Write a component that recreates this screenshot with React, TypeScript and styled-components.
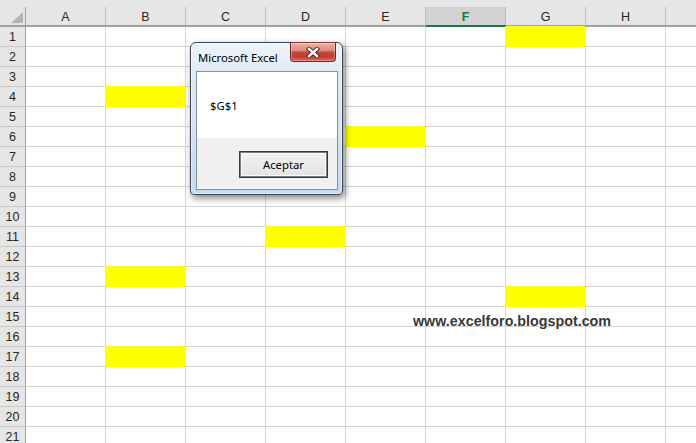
import React from "react";
import styled, { createGlobalStyle } from "styled-components";

const GlobalStyle = createGlobalStyle`
  html, body {
    margin: 0;
    padding: 0;
    background: #fff;
    overflow: hidden;
  }
  body {
    font-family: "Liberation Sans", Arial, sans-serif;
  }
`;

// Column I only peeks in at the right edge; its letter sits off-screen.
const COLUMNS = ["A", "B", "C", "D", "E", "F", "G", "H", "I"];
const VISIBLE_LABELS = new Set(["A", "B", "C", "D", "E", "F", "G", "H"]);
const ROW_COUNT = 21;
const SELECTED_COLUMN = "F";
const FILLED = new Set(["G1", "B4", "E6", "D11", "B13", "G14", "B17"]);

const Screen = styled.div`
  position: relative;
  width: 696px;
  height: 443px;
  overflow: hidden;
`;

const Sheet = styled.div`
  display: grid;
  grid-template-columns: 26px repeat(9, 80px);
  grid-template-rows: 27px;
  grid-auto-rows: 20px;
  width: max-content;
`;

const HeaderStrip = styled.div<{ $selected?: boolean }>`
  box-sizing: border-box;
  padding-top: 7px;
  background: #e6e6e6;
  border-bottom: 2px solid ${(p) => (p.$selected ? "#217346" : "#a2a2a2")};
  display: flex;
`;

const CornerBox = styled.div`
  flex: 1;
  box-sizing: border-box;
  border-right: 1px solid #a2a2a2;
  display: flex;
  align-items: flex-end;
  justify-content: flex-end;
  padding: 0 2px 2px 0;
`;

const ColumnLabel = styled.div<{ $selected?: boolean }>`
  flex: 1;
  box-sizing: border-box;
  border-right: 1px solid #bdbdbd;
  background: ${(p) => (p.$selected ? "#d2d2d2" : "transparent")};
  color: ${(p) => (p.$selected ? "#217346" : "#262626")};
  font-weight: ${(p) => (p.$selected ? 700 : 400)};
  font-size: 12.5px;
  display: flex;
  align-items: center;
  justify-content: center;
  padding-top: 1px;
`;

const RowHeader = styled.div`
  box-sizing: border-box;
  background: #e6e6e6;
  border-right: 1px solid #a2a2a2;
  border-bottom: 1px solid #c8c8c8;
  color: #262626;
  font-size: 12.5px;
  display: flex;
  align-items: center;
  justify-content: center;
`;

const Cell = styled.div<{ $filled?: boolean }>`
  box-sizing: border-box;
  border-right: 1px solid ${(p) => (p.$filled ? "#ffff00" : "#d4d4d4")};
  border-bottom: 1px solid ${(p) => (p.$filled ? "#ffff00" : "#d4d4d4")};
  background: ${(p) => (p.$filled ? "#ffff00" : "#fff")};
  box-shadow: ${(p) => (p.$filled ? "-1px -1px 0 0 #ffff00" : "none")};
`;

const Watermark = styled.div`
  position: absolute;
  left: 413px;
  top: 313px;
  font-family: "Liberation Sans", Arial, sans-serif;
  font-weight: 700;
  font-size: 14.3px;
  line-height: 16px;
  color: #383838;
  white-space: nowrap;
`;

const Window = styled.div`
  position: absolute;
  left: 190px;
  top: 42px;
  width: 153px;
  height: 153px;
  box-sizing: border-box;
  display: flex;
  flex-direction: column;
  padding: 0 4px 4px 5px;
  border: 1px solid #3b4655;
  border-radius: 6px 6px 4px 4px;
  background: linear-gradient(180deg, #edf3fa 0%, #dfe9f5 22%, #c6daf0 100%);
  box-shadow: inset 0 0 0 1px rgba(255, 255, 255, 0.55),
    2px 3px 7px rgba(0, 0, 0, 0.5);
  font-family: "Noto Sans", "Open Sans", sans-serif;
`;

const TitleBar = styled.div`
  height: 28px;
  display: flex;
  justify-content: space-between;
  align-items: flex-start;
`;

const Title = styled.span`
  align-self: center;
  padding-left: 2px;
  font-size: 11.3px;
  color: #000;
`;

const CloseButton = styled.div`
  width: 46px;
  height: 20px;
  margin: -1px 2px 0 0;
  box-sizing: border-box;
  border: 1px solid #6a2a22;
  border-top-color: #8a3a30;
  border-radius: 0 0 4px 4px;
  background: linear-gradient(
    180deg,
    #eab2a9 0%,
    #e0897e 42%,
    #c9483a 50%,
    #c23d2f 75%,
    #d56a5c 100%
  );
  box-shadow: inset 0 0 0 1px rgba(255, 255, 255, 0.3);
  display: flex;
  align-items: center;
  justify-content: center;
`;

const Client = styled.div`
  width: 142px;
  height: 119px;
  box-sizing: border-box;
  border: 1px solid #8192a6;
  background: #f0f0f0;
  display: flex;
  flex-direction: column;
`;

const Message = styled.div`
  height: 66px;
  background: #fff;
  display: flex;
  align-items: center;
  padding-left: 13px;
  font-size: 11.3px;
  color: #000;
`;

const Actions = styled.div`
  flex: 1;
  display: flex;
  justify-content: flex-end;
  align-items: flex-start;
  padding: 13px 9px 0 0;
`;

const DialogButton = styled.div`
  width: 89px;
  height: 27px;
  box-sizing: border-box;
  border: 1px solid #3a3a3a;
  box-shadow: inset 0 0 0 1px #7c7c7c, inset 0 0 0 2px #fbfbfb;
  background: linear-gradient(180deg, #f2f2f2 0%, #ebebeb 50%, #e3e3e3 100%);
  display: flex;
  align-items: center;
  justify-content: center;
  font-size: 11.3px;
  color: #000;
`;

function CornerTriangle() {
  return (
    <svg width="12" height="11" viewBox="0 0 12 11">
      <polygon points="12,0 12,11 0,11" fill="#b4b4b4" />
    </svg>
  );
}

function CloseGlyph() {
  return (
    <svg width="14" height="11" viewBox="0 0 14 11">
      <path d="M3 2 L11 9 M11 2 L3 9" stroke="#5a2520" strokeWidth="4.4" strokeLinecap="square" />
      <path d="M3 2 L11 9 M11 2 L3 9" stroke="#fff" strokeWidth="2.4" strokeLinecap="square" />
    </svg>
  );
}

function MessageBox() {
  return (
    <Window>
      <TitleBar>
        <Title>Microsoft Excel</Title>
        <CloseButton>
          <CloseGlyph />
        </CloseButton>
      </TitleBar>
      <Client>
        <Message>$G$1</Message>
        <Actions>
          <DialogButton>Aceptar</DialogButton>
        </Actions>
      </Client>
    </Window>
  );
}

export default function App() {
  const rows = Array.from({ length: ROW_COUNT }, (_, i) => i + 1);

  return (
    <Screen>
      <GlobalStyle />
      <Sheet>
        <HeaderStrip>
          <CornerBox>
            <CornerTriangle />
          </CornerBox>
        </HeaderStrip>
        {COLUMNS.map((col) => (
          <HeaderStrip key={col} $selected={col === SELECTED_COLUMN}>
            <ColumnLabel $selected={col === SELECTED_COLUMN}>
              {VISIBLE_LABELS.has(col) ? col : null}
            </ColumnLabel>
          </HeaderStrip>
        ))}
        {rows.map((row) => (
          <React.Fragment key={row}>
            <RowHeader>{row}</RowHeader>
            {COLUMNS.map((col) => (
              <Cell key={col + row} $filled={FILLED.has(col + row)} />
            ))}
          </React.Fragment>
        ))}
      </Sheet>
      <Watermark>www.excelforo.blogspot.com</Watermark>
      <MessageBox />
    </Screen>
  );
}
